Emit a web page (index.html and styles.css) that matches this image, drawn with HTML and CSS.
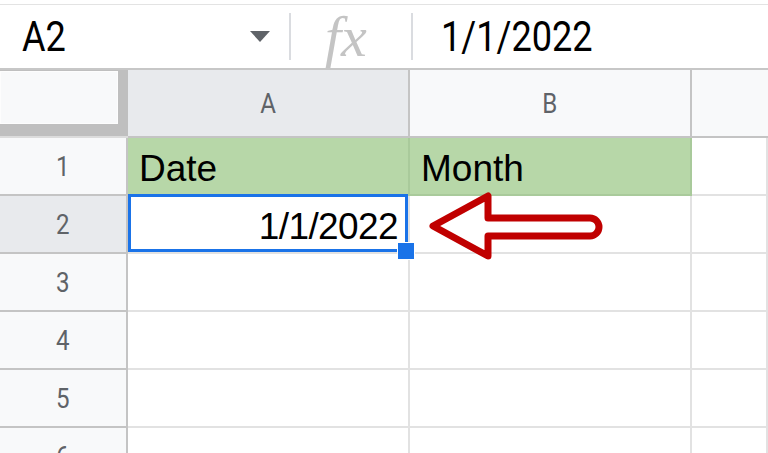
FILE: index.html
```html
<!DOCTYPE html>
<html lang="en">
<head>
    <meta charset="UTF-8">
    <meta name="viewport" content="width=device-width, initial-scale=1.0">
    <title>Sheet - Date</title>
    <link rel="stylesheet" href="styles.css">
</head>
<body>
    <div class="formula-bar">
        <div class="name-box">
            <span class="squeeze">A2</span>
            <span class="caret"></span>
        </div>
        <div class="divider"></div>
        <div class="fx">fx</div>
        <div class="divider"></div>
        <div class="formula-value"><span class="squeeze">1/1/2022</span></div>
    </div>

    <div class="sheet">
        <div class="corner"><div class="corner-box"></div></div>
        <div class="col-head selected"><span class="squeeze">A</span></div>
        <div class="col-head"><span class="squeeze">B</span></div>
        <div class="col-head last"></div>

        <div class="row-head"><span class="squeeze">1</span></div>
        <div class="cell green">Date</div>
        <div class="cell green">Month</div>
        <div class="cell"></div>

        <div class="row-head selected"><span class="squeeze">2</span></div>
        <div class="cell active">1/1/2022<span class="handle"></span></div>
        <div class="cell"></div>
        <div class="cell"></div>

        <div class="row-head"><span class="squeeze">3</span></div>
        <div class="cell"></div>
        <div class="cell"></div>
        <div class="cell"></div>

        <div class="row-head"><span class="squeeze">4</span></div>
        <div class="cell"></div>
        <div class="cell"></div>
        <div class="cell"></div>

        <div class="row-head"><span class="squeeze">5</span></div>
        <div class="cell"></div>
        <div class="cell"></div>
        <div class="cell"></div>

        <div class="row-head"><span class="squeeze">6</span></div>
        <div class="cell"></div>
        <div class="cell"></div>
        <div class="cell"></div>
    </div>

    <!-- red callout arrow pointing at A2 -->
    <svg class="arrow" width="768" height="453" viewBox="0 0 768 453">
        <path d="M433,226 L488,196 L488,218 L590,218 A9,9 0 0 1 590,236 L488,236 L488,256 Z"
              fill="none" stroke="#c00000" stroke-width="7" stroke-linejoin="round"/>
    </svg>
</body>
</html>
```

FILE: styles.css
```css
body {
    margin: 0;
    background-color: #fff;
    font-family: Roboto, Arial, sans-serif;
    position: relative;
    width: 768px;
    height: 453px;
    overflow: hidden;
}

.squeeze {
    display: inline-block;
    transform: scaleX(0.86);
}

/* formula bar */

.formula-bar {
    margin-top: 4px;
    height: 66px;
    box-sizing: border-box;
    border-top: 1px solid #e3e3e3;
    border-bottom: 2px solid #c7c7c7;
    display: flex;
    align-items: center;
    color: #000;
}

.name-box {
    width: 289px;
    box-sizing: border-box;
    padding-left: 22px;
    padding-right: 19px;
    display: flex;
    align-items: center;
    font-size: 42px;
}

.name-box .squeeze {
    transform-origin: left center;
}

.caret {
    margin-left: auto;
    width: 0;
    height: 0;
    border-left: 10px solid transparent;
    border-right: 10px solid transparent;
    border-top: 11px solid #5f6368;
}

.divider {
    width: 2px;
    height: 47px;
    background-color: #dadce0;
}

.fx {
    width: 120px;
    box-sizing: border-box;
    padding-left: 34px;
    font-family: "Liberation Serif", serif;
    font-style: italic;
    font-size: 58px;
    line-height: 56px;
    color: #c4c4c4;
}

.formula-value {
    padding-left: 28px;
    font-size: 42px;
}

.formula-value .squeeze {
    transform-origin: left center;
}

/* grid */

.sheet {
    display: grid;
    grid-template-columns: 128px 282px 282px 1fr;
    grid-template-rows: 68px repeat(6, 58px);
}

.corner {
    background-color: #bfbfbf;
    border-bottom: 2px solid #dcdcdc;
    box-sizing: border-box;
}

.corner-box {
    width: 118px;
    height: 53px;
    margin-top: 1px;
    box-sizing: border-box;
    background-color: #f8f9fa;
    border: 1px solid #fdfdfd;
}

.col-head,
.row-head {
    box-sizing: border-box;
    background-color: #f8f9fa;
    border-right: 2px solid #c4c4c4;
    border-bottom: 2px solid #c4c4c4;
    display: flex;
    align-items: center;
    justify-content: center;
    font-size: 28px;
    color: #5f6368;
}

.col-head.last {
    border-right: none;
}

.col-head.selected,
.row-head.selected {
    background-color: #e8eaed;
}

.cell {
    box-sizing: border-box;
    border-right: 2px solid #e2e2e2;
    border-bottom: 2px solid #e2e2e2;
    padding: 12px 10px 0 11px;
    font-family: "Liberation Sans", Arial, sans-serif;
    font-size: 37px;
    line-height: 37px;
    color: #000;
    white-space: nowrap;
}

.cell.green {
    background-color: #b7d7a8;
    border-right-color: #a9ca9b;
    border-bottom-color: #a9ca9b;
}

.cell.active {
    position: relative;
    text-align: right;
    padding-right: 10px;
    letter-spacing: -0.6px;
}

.cell.active::after {
    content: "";
    position: absolute;
    left: 0;
    top: -2px;
    right: 0;
    bottom: 0;
    border: 3px solid #1a73e8;
}

.handle {
    position: absolute;
    left: 269px;
    top: 46px;
    width: 18px;
    height: 18px;
    background-color: #1a73e8;
    border: 1px solid #fff;
    box-sizing: border-box;
    z-index: 1;
}

.arrow {
    position: absolute;
    left: 0;
    top: 0;
    pointer-events: none;
}
```
